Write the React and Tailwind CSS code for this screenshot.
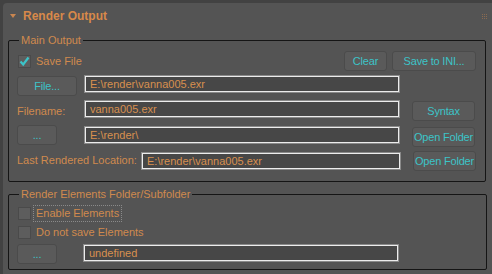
import React from 'react';

const font = { fontFamily: '"Liberation Sans", Arial, sans-serif' };

const Btn = ({ children, className = '' }) => (
  <button
    className={`flex h-[20px] items-center justify-center whitespace-nowrap rounded-[3px] border border-[#4b4b4b] bg-[#5a5a5a] px-0 text-[11px] tracking-[-0.2px] text-[#3cc4c8] ${className}`}
  >
    {children}
  </button>
);

const Field = ({ value, className = '' }) => (
  <div
    className={`flex h-[16px] items-center whitespace-nowrap border border-[#ececec] bg-[#474747] pl-[4px] text-[11px] text-[#d8904f] outline outline-1 outline-[#8a8a8a] ${className}`}
  >
    {value}
  </div>
);

const Check = ({ checked }) => (
  <div className="flex h-[13px] w-[13px] items-center justify-center border border-[#4a4a4a] bg-[#5d5d5d]">
    {checked && (
      <svg width="11" height="11" viewBox="0 0 11 11">
        <path d="M1.5 5.5 L4.2 8.5 L9.5 1.5" fill="none" stroke="#3cc4c8" strokeWidth="2.2" />
      </svg>
    )}
  </div>
);

export default function App() {
  return (
    <div className="h-[274px] w-[492px] overflow-hidden bg-[#424242] pl-[3px] pt-[3px]" style={font}>
      <div className="h-full rounded-tl-[4px] bg-[#545454]">
        {/* header */}
        <div className="flex h-[26px] items-center">
          <svg className="ml-[6px]" width="8" height="8" viewBox="0 0 8 8">
            <path d="M1 2 L7 2 L4 6 Z" fill="#c98650" />
          </svg>
          <span className="ml-[6px] text-[12px] font-bold text-[#d8894a]">Render Output</span>
          <div className="ml-auto mr-[5px] grid grid-cols-3 gap-[1px]">
            {Array.from({ length: 9 }).map((_, i) => (
              <div key={i} className="h-[1px] w-[1px] bg-[#8a6a50]" />
            ))}
          </div>
        </div>

        {/* Main Output */}
        <fieldset className="ml-[5px] mt-[4px] h-[149px] w-[478px] rounded-[2px] border border-[#151515] px-[8px]">
          <legend className="ml-[2px] px-[2px] text-[11px] leading-[14px] text-[#d08a4e]">Main Output</legend>
          <div className="mt-[4px] flex h-[20px] items-center">
            <div className="ml-[1px]"><Check checked /></div>
            <span className="ml-[5px] text-[11px] text-[#d08a4e]">Save File</span>
            <Btn className="ml-auto w-[43px]">Clear</Btn>
            <Btn className="ml-[5px] mr-[1px] w-[84px]">Save to INI...</Btn>
          </div>
          <div className="mt-[5px] flex items-start">
            <Btn className="w-[60px]">File...</Btn>
            <Field className="ml-[8px] w-[314px]" value="E:\render\vanna005.exr" />
          </div>
          <div className="mt-[5px] flex items-start">
            <span className="mt-[5px] w-[68px] text-[11px] leading-[11px] text-[#d08a4e]">Filename:</span>
            <Field className="w-[314px]" value="vanna005.exr" />
            <Btn className="ml-[13px] w-[63px]">Syntax</Btn>
          </div>
          <div className="mt-[4px] flex items-start">
            <Btn className="w-[40px]">...</Btn>
            <Field className="ml-[28px] mt-[2px] w-[314px]" value="E:\render\" />
            <Btn className="ml-[13px] mt-[2px] w-[63px]">Open Folder</Btn>
          </div>
          <div className="mt-[4px] flex items-start">
            <span className="mt-[4px] w-[125px] whitespace-nowrap text-[11px] leading-[11px] text-[#d08a4e]">Last Rendered Location:</span>
            <Field className="mt-[2px] w-[258px]" value="E:\render\vanna005.exr" />
            <Btn className="ml-[13px] w-[63px]">Open Folder</Btn>
          </div>
        </fieldset>

        {/* Render Elements */}
        <fieldset className="ml-[5px] mt-[5px] h-[83px] w-[479px] rounded-[2px] border border-[#151515] px-[8px]">
          <legend className="ml-[2px] px-[2px] text-[11px] leading-[14px] text-[#d08a4e]">Render Elements Folder/Subfolder</legend>
          <div className="mt-[4px] flex h-[17px] items-center">
            <div className="ml-[1px]"><Check /></div>
            <span className="ml-[2px] border border-dotted border-[#8a8a8a] px-[2px] text-[11px] leading-[15px] text-[#d08a4e]">Enable Elements</span>
          </div>
          <div className="mt-[3px] flex h-[14px] items-center">
            <div className="ml-[1px]"><Check /></div>
            <span className="ml-[5px] text-[11px] text-[#d08a4e]">Do not save Elements</span>
          </div>
          <div className="mt-[5px] flex items-start">
            <Btn className="w-[40px]">...</Btn>
            <Field className="ml-[27px] mt-[1px] w-[314px]" value="undefined" />
          </div>
        </fieldset>
      </div>
    </div>
  );
}
